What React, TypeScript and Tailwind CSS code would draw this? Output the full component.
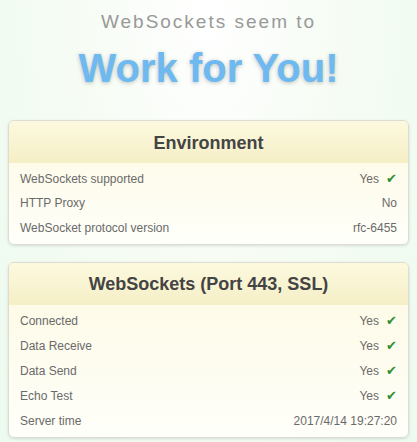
type Row = { label: string; value: string; ok?: boolean };

const ENV_ROWS: Row[] = [
  { label: "WebSockets supported", value: "Yes", ok: true },
  { label: "HTTP Proxy", value: "No" },
  { label: "WebSocket protocol version", value: "rfc-6455" },
];

const WS_ROWS: Row[] = [
  { label: "Connected", value: "Yes", ok: true },
  { label: "Data Receive", value: "Yes", ok: true },
  { label: "Data Send", value: "Yes", ok: true },
  { label: "Echo Test", value: "Yes", ok: true },
  { label: "Server time", value: "2017/4/14 19:27:20" },
];

function Panel({ title, rows, rowH }: { title: string; rows: Row[]; rowH: string }) {
  return (
    <div className="rounded-[6px] border border-[#dcdcd0] bg-gradient-to-b from-[#fdf9e2] to-[#fffffa] shadow-[0_1px_3px_rgba(0,0,0,0.12)] overflow-hidden">
      <div className="h-[42px] pt-[2px] flex items-center justify-center bg-gradient-to-b from-[#fcf9df] to-[#f5efc6] text-[18px] font-bold text-[#444]">
        {title}
      </div>
      <div className="pt-[3.5px] pb-[3.5px] px-[11px] text-[12px] text-[#6a6a6a]">
        {rows.map((r) => (
          <div key={r.label} className={`${rowH} flex items-center justify-between`}>
            <span>{r.label}</span>
            <span className="flex items-center">
              {r.value}
              {r.ok && <span className="ml-[7px] text-[#2f8f2f] text-[13px] leading-none">✔</span>}
            </span>
          </div>
        ))}
      </div>
    </div>
  );
}

export default function App() {
  return (
    <div
      className="min-h-[442px] w-full px-2 bg-[radial-gradient(ellipse_at_50%_0%,#ffffff_0%,#f6fcf4_45%,#ecfaef_100%)]"
      style={{ fontFamily: '"Liberation Sans", Arial, sans-serif' }}
    >
      <div className="pt-[10px] text-center text-[19px] leading-[24px] tracking-[2px] text-[#999]">
        WebSockets seem to
      </div>
      <div className="mt-[11px] text-center text-[40px] leading-[46px] font-bold text-[#6db9f0] [text-shadow:0_1px_4px_rgba(0,0,0,0.25)]">
        Work for You!
      </div>
      <div className="mt-[29px] flex flex-col gap-[17px]">
        <Panel title="Environment" rows={ENV_ROWS} rowH="h-[24.5px]" />
        <Panel title="WebSockets (Port 443, SSL)" rows={WS_ROWS} rowH="h-[25px]" />
      </div>
    </div>
  );
}
